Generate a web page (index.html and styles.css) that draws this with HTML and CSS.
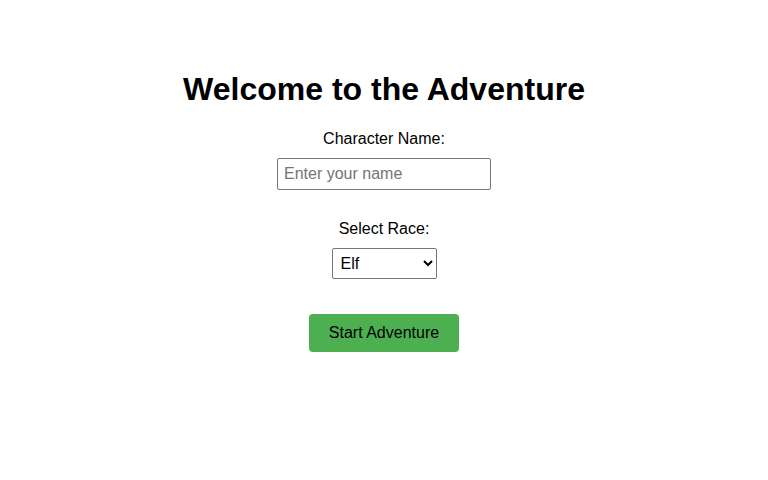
FILE: index.html
```html
<!DOCTYPE html>
<html lang="en">
<head>
<meta charset="utf-8">
<title>Adventure</title>
<link rel="stylesheet" href="styles.css">
</head>
<body>
  <main class="start">
    <h1 class="title">Welcome to the Adventure</h1>
    <form class="form">
      <div class="field field-name">
        <label class="label" for="name">Character Name:</label>
        <input class="text-input" id="name" type="text" placeholder="Enter your name">
      </div>
      <div class="field field-race">
        <label class="label" for="race">Select Race:</label>
        <select class="select" id="race">
          <option>Elf</option>
          <option>Human</option>
          <option>Dwarf</option>
          <option>Orc</option>
        </select>
      </div>
      <button class="start-btn" type="button">Start Adventure</button>
    </form>
  </main>
</body>
</html>
```

FILE: styles.css
```css
html, body {
  margin: 0;
  padding: 0;
  background: #fff;
}

body {
  font-family: "Liberation Sans", Arial, sans-serif;
  font-size: 16px;
  color: #000;
}

.start {
  display: flex;
  flex-direction: column;
  align-items: center;
  padding-top: 71px;
}

.title {
  margin: 0 0 21px;
  font-size: 32px;
  line-height: 37px;
  font-weight: bold;
}

.form {
  display: flex;
  flex-direction: column;
  align-items: center;
}

.field {
  display: flex;
  flex-direction: column;
  align-items: center;
}

.field-name {
  margin-bottom: 29px;
}

.field-race {
  margin-bottom: 35px;
}

.label {
  display: block;
  line-height: 18px;
  padding-top: 1px;
  margin-bottom: 10px;
}

.text-input {
  box-sizing: border-box;
  width: 214px;
  height: 32px;
  padding: 6px;
  margin: 0;
  font-family: inherit;
  font-size: 16px;
  border: 1px solid #767676;
  border-radius: 2px;
}

.text-input::placeholder {
  color: #757575;
}

.select {
  box-sizing: border-box;
  width: 105px;
  height: 31px;
  padding: 4px 4px;
  margin: 0;
  font-family: inherit;
  font-size: 16px;
  border: 1px solid #767676;
  border-radius: 2px;
  background: #fff;
  color: #000;
}

.start-btn {
  box-sizing: border-box;
  height: 38px;
  padding: 10px 20px;
  margin: 0;
  border: none;
  border-radius: 4px;
  background: #4caf50;
  color: #000;
  font-family: inherit;
  font-size: 16px;
  line-height: 18px;
  white-space: nowrap;
  cursor: pointer;
}
```
